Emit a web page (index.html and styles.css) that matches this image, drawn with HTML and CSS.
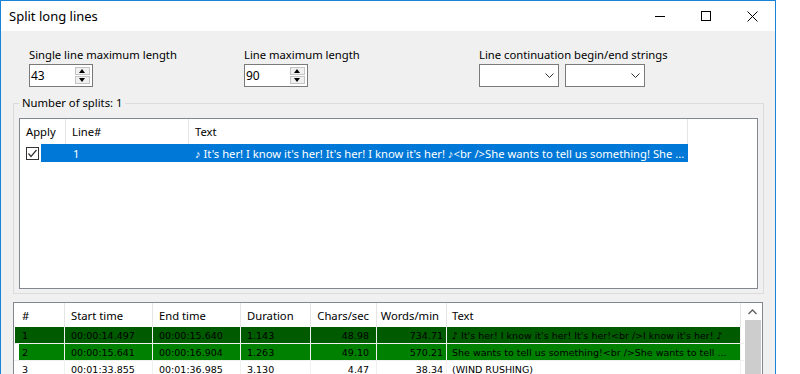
FILE: index.html
```html
<!DOCTYPE html>
<html lang="en">

<head>
    <meta charset="UTF-8">
    <title>Split long lines</title>
    <link rel="stylesheet" href="styles.css">
</head>

<body>
    <div class="window">
        <div class="titlebar">
            <span class="title">Split long lines</span>
            <div class="caption_buttons">
                <span class="cap_btn"><svg width="10" height="10" viewBox="0 0 10 10"><path d="M0 5.5H10" stroke="#000" fill="none"/></svg></span>
                <span class="cap_btn"><svg width="10" height="10" viewBox="0 0 10 10"><rect x="0.5" y="0.5" width="9" height="9" stroke="#000" fill="none"/></svg></span>
                <span class="cap_btn"><svg width="11" height="11" viewBox="0 0 11 11"><path d="M0.5 0.5L10.5 10.5M10.5 0.5L0.5 10.5" stroke="#000" fill="none"/></svg></span>
            </div>
        </div>

        <div class="content">
            <!-- 上面的三个设置项 -->
            <div class="settings">
                <div class="field field_single">
                    <label>Single line maximum length</label>
                    <div class="numeric">
                        <span class="num_value">43</span>
                        <span class="spin"><span class="spin_up"></span><span class="spin_down"></span></span>
                    </div>
                </div>
                <div class="field field_line">
                    <label>Line maximum length</label>
                    <div class="numeric">
                        <span class="num_value">90</span>
                        <span class="spin"><span class="spin_up"></span><span class="spin_down"></span></span>
                    </div>
                </div>
                <div class="field">
                    <label>Line continuation begin/end strings</label>
                    <div class="combos">
                        <div class="combo"><svg width="9" height="5" viewBox="0 0 9 5"><path d="M0.5 0.5L4.5 4.5L8.5 0.5" stroke="#333" fill="none"/></svg></div>
                        <div class="combo"><svg width="9" height="5" viewBox="0 0 9 5"><path d="M0.5 0.5L4.5 4.5L8.5 0.5" stroke="#333" fill="none"/></svg></div>
                    </div>
                </div>
            </div>

            <fieldset class="splits">
                <legend>Number of splits: 1</legend>
                <div class="listview split_list">
                    <div class="lv_header">
                        <span class="col c_apply">Apply</span>
                        <span class="col c_line">Line#</span>
                        <span class="col c_text">Text</span>
                    </div>
                    <div class="split_row">
                        <span class="chk_cell">
                            <span class="checkbox"><svg width="11" height="11" viewBox="0 0 11 11"><path d="M1.5 5.5L4 8.5L9.5 2" stroke="#333" stroke-width="1.2" fill="none"/></svg></span>
                        </span>
                        <span class="selected">
                            <span class="s_apply"></span>
                            <span class="s_line">1</span>
                            <span class="s_text">♪ It's her! I know it's her! It's her! I know it's her! ♪&lt;br /&gt;She wants to tell us something! She ...</span>
                        </span>
                    </div>
                </div>
            </fieldset>

            <div class="listview sub_list">
                <div class="sub_table">
                    <div class="sub_header">
                        <span class="sc sc_num">#</span>
                        <span class="sc sc_start">Start time</span>
                        <span class="sc sc_end">End time</span>
                        <span class="sc sc_dur">Duration</span>
                        <span class="sc sc_cps right">Chars/sec</span>
                        <span class="sc sc_wpm right">Words/min</span>
                        <span class="sc sc_text">Text</span>
                    </div>
                    <div class="sub_row row_dark">
                        <span class="sc sc_num">1</span>
                        <span class="sc sc_start">00:00:14.497</span>
                        <span class="sc sc_end">00:00:15.640</span>
                        <span class="sc sc_dur">1.143</span>
                        <span class="sc sc_cps right">48.98</span>
                        <span class="sc sc_wpm right">734.71</span>
                        <span class="sc sc_text">♪ It's her! I know it's her! It's her!&lt;br /&gt;I know it's her! ♪</span>
                    </div>
                    <div class="sub_row row_green row_focus">
                        <span class="sc sc_num">2</span>
                        <span class="sc sc_start">00:00:15.641</span>
                        <span class="sc sc_end">00:00:16.904</span>
                        <span class="sc sc_dur">1.263</span>
                        <span class="sc sc_cps right">49.10</span>
                        <span class="sc sc_wpm right">570.21</span>
                        <span class="sc sc_text">She wants to tell us something!&lt;br /&gt;She wants to tell ...</span>
                    </div>
                    <div class="sub_row">
                        <span class="sc sc_num">3</span>
                        <span class="sc sc_start">00:01:33.855</span>
                        <span class="sc sc_end">00:01:36.985</span>
                        <span class="sc sc_dur">3.130</span>
                        <span class="sc sc_cps right">4.47</span>
                        <span class="sc sc_wpm right">38.34</span>
                        <span class="sc sc_text">(WIND RUSHING)</span>
                    </div>
                </div>
                <div class="vscroll">
                    <span class="scroll_up"><svg width="9" height="6" viewBox="0 0 9 6"><path d="M0.5 5L4.5 1L8.5 5" stroke="#606060" stroke-width="1.4" fill="none"/></svg></span>
                    <span class="scroll_thumb"></span>
                </div>
            </div>
        </div>
    </div>
</body>

</html>
```

FILE: styles.css
```css
* {
    margin: 0;
    padding: 0;
    box-sizing: border-box;
}

body {
    height: 374px;
    overflow: hidden;
    background-color: #fff;
    font-family: "Noto Sans", "Open Sans", sans-serif;
    font-size: 11.25px;
    color: #000;
}

.window {
    display: flex;
    flex-direction: column;
    width: 776px;
    height: 420px;
    border: 1px solid #1883d7;
    border-bottom: none;
}

.titlebar {
    display: flex;
    align-items: center;
    height: 30px;
    background-color: #fff;
}

.title {
    flex: 1;
    padding-left: 8px;
    font-size: 13px;
}

.caption_buttons {
    display: flex;
    height: 100%;
}

.cap_btn {
    display: flex;
    align-items: center;
    justify-content: center;
    width: 46px;
}

.content {
    flex: 1;
    background-color: #f0f0f0;
}

/* 顶部设置 */
.settings {
    display: flex;
    height: 56px;
    padding: 16px 0 0 28px;
}

.field {
    display: flex;
    flex-direction: column;
    gap: 1px;
}

.field label {
    height: 16px;
    line-height: 16px;
}

.field_single {
    width: 215px;
}

.field_line {
    width: 235px;
}

.numeric {
    display: flex;
    align-items: center;
    width: 64px;
    height: 23px;
    padding: 0 2px 0 1px;
    border: 1px solid #7a7a7a;
    background-color: #fff;
}

.num_value {
    flex: 1;
    font-size: 12px;
}

.spin {
    display: flex;
    flex-direction: column;
    gap: 1px;
    width: 15px;
}

.spin_up,
.spin_down {
    position: relative;
    height: 8px;
    border: 1px solid #c4c4c4;
    background-color: #f0f0f0;
}

.spin_up::after,
.spin_down::after {
    content: "";
    position: absolute;
    left: 3px;
    border-left: 3.5px solid transparent;
    border-right: 3.5px solid transparent;
}

.spin_up::after {
    top: 1px;
    border-bottom: 4px solid #000;
}

.spin_down::after {
    top: 1px;
    border-top: 4px solid #000;
}

.combos {
    display: flex;
    gap: 6px;
}

.combo {
    display: flex;
    align-items: center;
    justify-content: flex-end;
    width: 80px;
    height: 23px;
    padding-right: 4px;
    border: 1px solid #7a7a7a;
    background-color: #fff;
}

/* 分组框 */
.splits {
    width: 751px;
    margin: 8px 0 0 12px;
    padding: 7px 5px 4px 5px;
    border: 1px solid #dcdcdc;
}

.splits legend {
    padding: 0 3px;
    line-height: 16px;
}

.listview {
    border: 1px solid #828790;
    background-color: #fff;
}

.split_list {
    height: 171px;
}

.lv_header {
    display: flex;
    height: 25px;
}

.col {
    display: flex;
    align-items: center;
    padding-left: 6px;
    border-right: 1px solid #e5e5e5;
}

.c_apply {
    width: 46px;
}

.c_line {
    width: 123px;
}

.c_text {
    width: 499px;
}

.split_row {
    display: flex;
    height: 18px;
}

.chk_cell {
    display: flex;
    align-items: center;
    width: 21px;
    padding-left: 6px;
}

.checkbox {
    display: flex;
    align-items: center;
    justify-content: center;
    width: 13px;
    height: 13px;
    border: 1px solid #333;
    background-color: #fff;
}

.selected {
    display: flex;
    align-items: center;
    background-color: #0078d7;
    color: #fff;
}

.s_apply {
    width: 25px;
}

.s_line {
    width: 123px;
    padding-left: 7px;
}

.s_text {
    width: 499px;
    padding-left: 6px;
    white-space: nowrap;
    overflow: hidden;
}

/* 下面的字幕列表 */
.sub_list {
    display: flex;
    width: 750px;
    height: 100px;
    margin: 8px 0 0 12px;
}

.sub_table {
    flex: 1;
}

.sub_header {
    display: flex;
    height: 24px;
}

.sub_header .sc {
    display: flex;
    align-items: center;
    border-right: 1px solid #e5e5e5;
}

.sub_row {
    display: flex;
    height: 17px;
    border-bottom: 1px solid #f0f0f0;
    font-family: "DejaVu Sans", sans-serif;
    font-size: 9.5px;
}

.sub_row .sc {
    display: flex;
    align-items: center;
    border-right: 1px solid #f0f0f0;
}

.sc {
    padding-left: 6px;
    white-space: nowrap;
    overflow: hidden;
}

.sc.right {
    justify-content: flex-end;
    padding-left: 0;
    padding-right: 7px;
}

.sc_num {
    width: 51px;
    padding-left: 8px;
}

.sc_start,
.sc_end {
    width: 88px;
}

.sc_dur {
    width: 70px;
}

.sc_cps {
    width: 66px;
}

.sc_wpm {
    width: 70px;
}

.sub_row .sc_wpm {
    padding-right: 3px;
}

.sc_text {
    width: 294px;
    padding-left: 5px;
}

.sub_row .sc_num {
    border-left: 1px solid #fff;
    padding-left: 7px;
}

.row_focus .sc_num {
    border-left-width: 5px;
    padding-left: 3px;
}

.row_dark .sc {
    background-color: #005a00;
}

.row_green .sc {
    background-color: #008000;
}

.vscroll {
    display: flex;
    flex-direction: column;
    width: 17px;
    margin-right: 1px;
}

.scroll_up {
    display: flex;
    align-items: center;
    justify-content: center;
    height: 17px;
}

.scroll_thumb {
    flex: 1;
    margin-left: 1px;
    background-color: #cdcdcd;
}
```
